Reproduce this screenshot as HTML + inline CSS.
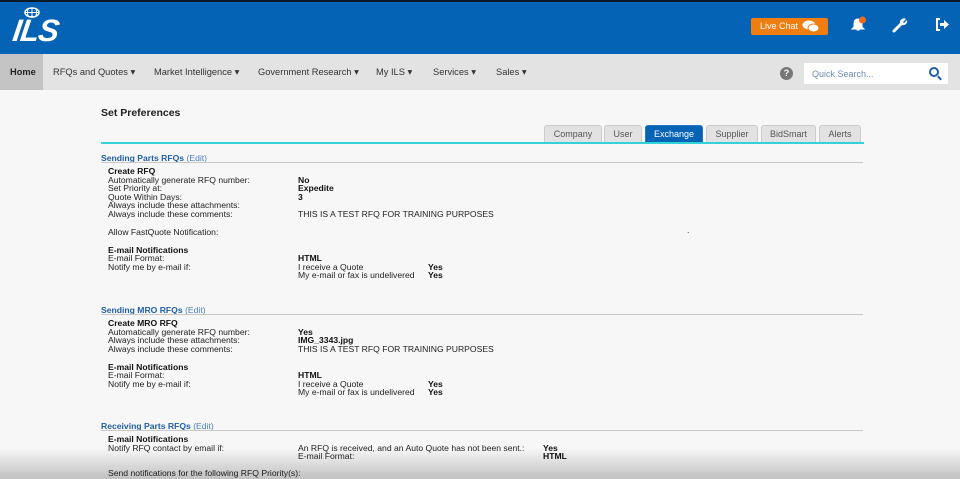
<!DOCTYPE html>
<html><head><meta charset="utf-8"><style>
*{margin:0;padding:0;box-sizing:border-box}
body{width:960px;height:479px;overflow:hidden;background:#f7f7f7;font-family:"Liberation Sans",sans-serif;position:relative}
.a{position:absolute;white-space:nowrap}
.t{font-size:8.6px;color:#222;line-height:9px}
.b{font-weight:bold;color:#111}
.h{font-size:8.6px;color:#1f5fa8;font-weight:bold}
.h span{font-weight:normal;color:#4a7fc0}
.rule{position:absolute;left:101px;width:762px;height:1px;background:#c8c8c8}
.nav{font-size:9.3px;color:#333}
.tab{position:absolute;top:125px;height:17px;background:#e2e2e2;border:1px solid #ccc;border-bottom:none;border-radius:3px 3px 0 0;font-size:9px;color:#555;text-align:center;line-height:16px}
</style></head><body>
<div class="a" style="left:0;top:0;width:960px;height:54px;background:#0563b5;border-top:2px solid #0a1a2a"></div>
<div class="a" style="left:13px;top:13px;color:#fff;font:italic 900 31px 'Liberation Sans',sans-serif;letter-spacing:-1px;transform:skewX(-8deg)">ILS</div>
<svg class="a" style="left:24px;top:7px" width="16" height="11" viewBox="0 0 16 11"><ellipse cx="8" cy="5.5" rx="7" ry="4.5" fill="none" stroke="#fff" stroke-width="1.5"/><path d="M1 5.5H15M8 1V10M4 2Q3 5.5 4 9M12 2Q13 5.5 12 9" stroke="#fff" stroke-width="1" fill="none"/></svg>
<div class="a" style="left:751px;top:18px;width:77px;height:17px;background:#ef7d0f;border-radius:2px;color:#fff;font-size:9px;line-height:17px;padding-left:9px">Live Chat</div>
<svg class="a" style="left:802px;top:20px" width="18" height="13" viewBox="0 0 18 13"><ellipse cx="7" cy="5" rx="6.5" ry="4.5" fill="#fff"/><ellipse cx="11.5" cy="8" rx="5.5" ry="4" fill="#fff" stroke="#ef7d0f" stroke-width="1"/></svg>
<svg class="a" style="left:850px;top:16px" width="18" height="16" viewBox="0 0 18 16"><path d="M8 3C5 3 4 5 4 8V11L2 13H14L12 11V8C12 5 11 3 8 3Z M6.5 14H9.5" fill="#fff" stroke="#fff"/><circle cx="12.5" cy="4" r="3.5" fill="#ef6a1b"/></svg>
<svg class="a" style="left:892px;top:17px" width="16" height="16" viewBox="0 0 16 16"><path d="M2 14L9 7" stroke="#fff" stroke-width="3" stroke-linecap="round"/><path d="M8 6A4 4 0 0 1 14 2L11 5L12 6L15 3A4 4 0 0 1 10 8Z" fill="#fff"/></svg>
<svg class="a" style="left:935px;top:18px" width="15" height="13" viewBox="0 0 15 13"><path d="M5 1H2V12H5" stroke="#fff" stroke-width="2" fill="none"/><path d="M5 5H9V2L14 6.5L9 11V8H5Z" fill="#fff"/></svg>
<div class="a" style="left:0;top:54px;width:960px;height:36px;background:#e3e3e3"></div>
<div class="a" style="left:0;top:54px;width:43px;height:36px;background:#c4c4c4"></div>
<div class="a nav" style="left:10px;top:67px;font-weight:bold;color:#222">Home</div>
<div class="a nav" style="left:53px;top:67px">RFQs and Quotes ▾</div>
<div class="a nav" style="left:154px;top:67px">Market Intelligence ▾</div>
<div class="a nav" style="left:258px;top:67px">Government Research ▾</div>
<div class="a nav" style="left:376px;top:67px">My ILS ▾</div>
<div class="a nav" style="left:433px;top:67px">Services ▾</div>
<div class="a nav" style="left:496px;top:67px">Sales ▾</div>
<div class="a" style="left:780px;top:67px;width:13px;height:13px;border-radius:50%;background:#777;color:#fff;font-size:9px;font-weight:bold;text-align:center;line-height:13px">?</div>
<div class="a" style="left:804px;top:63px;width:144px;height:21px;background:#fff"></div>
<div class="a" style="left:812px;top:69px;font-size:9px;color:#6b8db5">Quick Search...</div>
<div class="a" style="left:929px;top:67px;width:10px;height:10px;border:2px solid #1f5fa8;border-radius:50%"></div>
<div class="a" style="left:937px;top:77px;width:5px;height:2px;background:#1f5fa8;transform:rotate(45deg)"></div>
<div class="a" style="left:101px;top:107px;font-size:10.5px;font-weight:bold;color:#222">Set Preferences</div>
<div class="tab" style="left:544px;width:58px">Company</div>
<div class="tab" style="left:604px;width:38px">User</div>
<div class="tab" style="left:645px;width:58px;background:#0563b5;color:#fff;border-color:#2a75c5">Exchange</div>
<div class="tab" style="left:706px;width:52px">Supplier</div>
<div class="tab" style="left:761px;width:55px">BidSmart</div>
<div class="tab" style="left:819px;width:42px">Alerts</div>
<div class="a" style="left:101px;top:142px;width:763px;height:2px;background:#33d1d8"></div>

<div class="a h" style="left:101px;top:153px">Sending Parts RFQs <span>(Edit)</span></div>
<div class="rule" style="top:162px"></div>
<div class="a t b" style="left:108px;top:167px">Create RFQ</div>
<div class="a t" style="left:108px;top:176px">Automatically generate RFQ number:</div><div class="a t b" style="left:298px;top:176px">No</div>
<div class="a t" style="left:108px;top:184px">Set Priority at:</div><div class="a t b" style="left:298px;top:184px">Expedite</div>
<div class="a t" style="left:108px;top:193px">Quote Within Days:</div><div class="a t b" style="left:298px;top:193px">3</div>
<div class="a t" style="left:108px;top:201px">Always include these attachments:</div>
<div class="a t" style="left:108px;top:210px">Always include these comments:</div><div class="a t" style="left:298px;top:210px">THIS IS A TEST RFQ FOR TRAINING PURPOSES</div>
<div class="a t" style="left:108px;top:228px">Allow FastQuote Notification:</div><div class="a t" style="left:687px;top:226px">.</div>
<div class="a t b" style="left:108px;top:246px">E-mail Notifications</div>
<div class="a t" style="left:108px;top:254px">E-mail Format:</div><div class="a t b" style="left:298px;top:254px">HTML</div>
<div class="a t" style="left:108px;top:263px">Notify me by e-mail if:</div><div class="a t" style="left:298px;top:263px">I receive a Quote</div><div class="a t b" style="left:428px;top:263px">Yes</div>
<div class="a t" style="left:298px;top:271px">My e-mail or fax is undelivered</div><div class="a t b" style="left:428px;top:271px">Yes</div>

<div class="a h" style="left:101px;top:305px">Sending MRO RFQs <span>(Edit)</span></div>
<div class="rule" style="top:314px"></div>
<div class="a t b" style="left:108px;top:319px">Create MRO RFQ</div>
<div class="a t" style="left:108px;top:328px">Automatically generate RFQ number:</div><div class="a t b" style="left:298px;top:328px">Yes</div>
<div class="a t" style="left:108px;top:336px">Always include these attachments:</div><div class="a t b" style="left:298px;top:336px">IMG_3343.jpg</div>
<div class="a t" style="left:108px;top:345px">Always include these comments:</div><div class="a t" style="left:298px;top:345px">THIS IS A TEST RFQ FOR TRAINING PURPOSES</div>
<div class="a t b" style="left:108px;top:363px">E-mail Notifications</div>
<div class="a t" style="left:108px;top:371px">E-mail Format:</div><div class="a t b" style="left:298px;top:371px">HTML</div>
<div class="a t" style="left:108px;top:380px">Notify me by e-mail if:</div><div class="a t" style="left:298px;top:380px">I receive a Quote</div><div class="a t b" style="left:428px;top:380px">Yes</div>
<div class="a t" style="left:298px;top:388px">My e-mail or fax is undelivered</div><div class="a t b" style="left:428px;top:388px">Yes</div>

<div class="a h" style="left:101px;top:421px">Receiving Parts RFQs <span>(Edit)</span></div>
<div class="rule" style="top:430px"></div>
<div class="a t b" style="left:108px;top:435px">E-mail Notifications</div>
<div class="a t" style="left:108px;top:444px">Notify RFQ contact by email if:</div><div class="a t" style="left:298px;top:444px">An RFQ is received, and an Auto Quote has not been sent.:</div><div class="a t b" style="left:543px;top:444px">Yes</div>
<div class="a t" style="left:298px;top:452px">E-mail Format:</div><div class="a t b" style="left:543px;top:452px">HTML</div>
<div class="a t" style="left:108px;top:469px">Send notifications for the following RFQ Priority(s):</div>
<div class="a" style="left:0;top:448px;width:960px;height:31px;background:linear-gradient(to bottom,rgba(0,0,0,0),rgba(0,0,0,0.22))"></div>
</body></html>
